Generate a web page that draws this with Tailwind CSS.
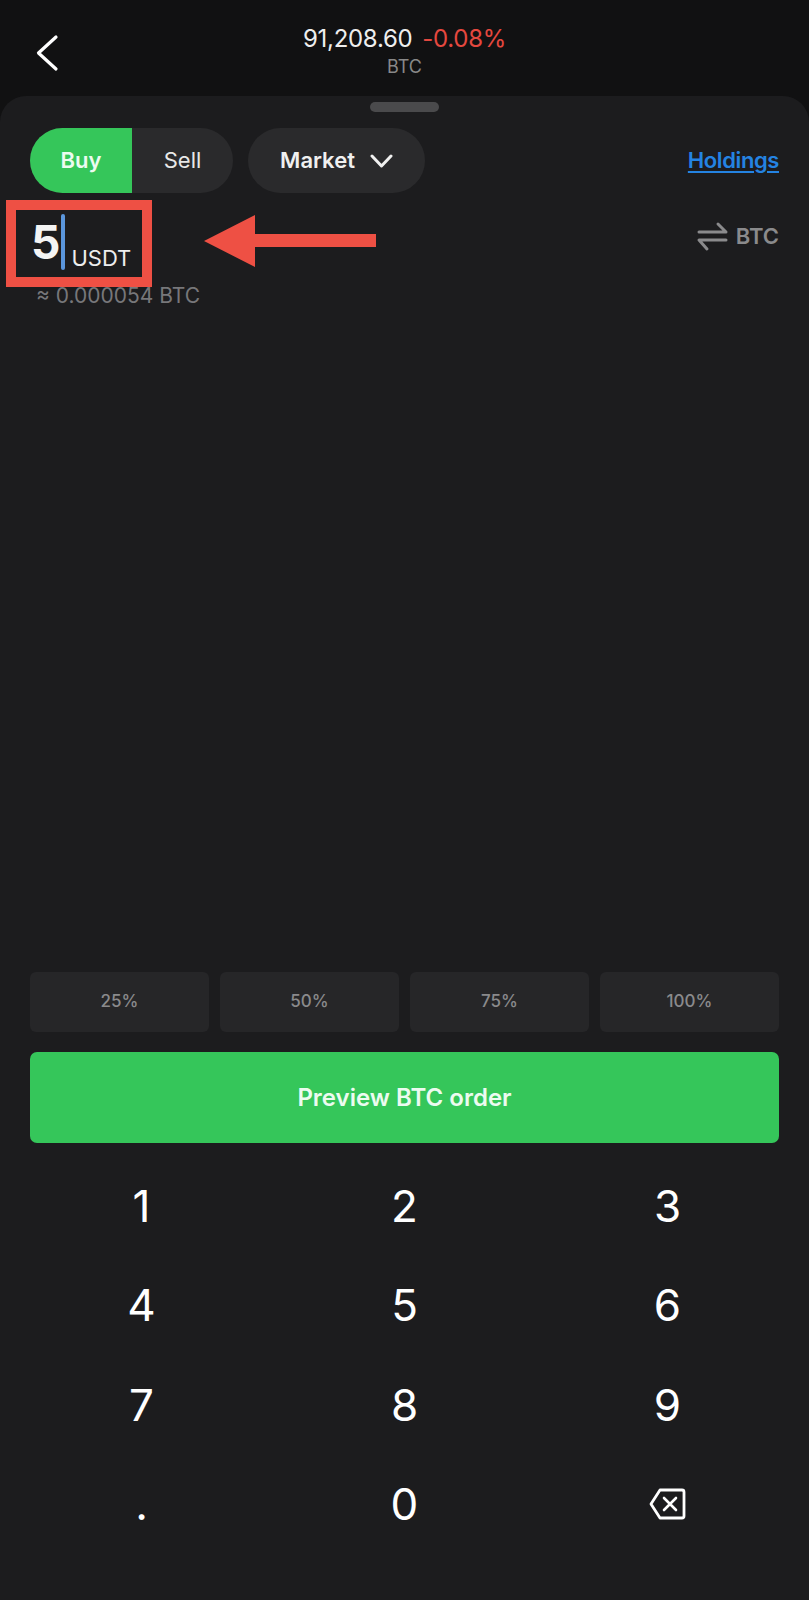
<!DOCTYPE html>
<html lang="en">
<head>
<meta charset="utf-8">
<script src="https://cdn.jsdelivr.net/npm/@tailwindcss/browser@4"></script>
<title>BTC order</title>
</head>
<body class="bg-[#111112] font-['Inter','Liberation_Sans',sans-serif]">
<div class="w-[809px] h-[1600px] flex flex-col overflow-hidden bg-[#111112]">
  <header class="relative h-[96px] shrink-0">
    <svg class="absolute left-[34px] top-[34px]" width="26" height="38" viewBox="0 0 26 38" fill="none"><path d="M22 4 L4.500 20 L22 36" stroke="#fff" stroke-width="3.200" stroke-linecap="round" stroke-linejoin="round" transform="translate(0 -1)"/></svg>
    <div class="flex flex-col items-center pt-[24px]">
      <div class="flex gap-[10px] text-[24px] leading-[30px] tracking-[-0.3px]">
        <span class="text-[#eeeeee]">91,208.60</span><span class="text-[#e5483f]">-0.08%</span>
      </div>
      <div class="text-[18px] leading-[24px] mt-[1px] text-[#888888]">BTC</div>
    </div>
  </header>
  <main class="relative flex-1 flex flex-col bg-[#1c1c1e] rounded-t-[26px] px-[30px]">
    <div class="absolute left-[370px] top-[6px] w-[69px] h-[10px] rounded-full bg-[#4a4a4c]"></div>
    <div class="flex items-center mt-[32px] h-[65px]">
      <div class="flex w-[203px] h-full rounded-full overflow-hidden bg-[#2a2a2c] text-[22px]">
        <div class="w-[102px] flex items-center justify-center bg-[#35c65a] text-[#ecfbf0] font-semibold">Buy</div>
        <div class="flex-1 flex items-center justify-center text-[#e8e8e8]">Sell</div>
      </div>
      <div class="ml-[15px] w-[177px] h-full rounded-full bg-[#2a2a2c] flex items-center justify-center gap-[15px] text-[22px] font-semibold text-[#f0f0f0]">
        <span>Market</span>
        <svg width="23" height="14" viewBox="0 0 23 14" fill="none"><path d="M2 2 L11.500 12 L21 2" stroke="#f0f0f0" stroke-width="3" stroke-linecap="round" stroke-linejoin="round"/></svg>
      </div>
      <a class="ml-auto text-[22px] font-semibold tracking-[-0.4px] text-[#2483e2] underline underline-offset-[3px] decoration-2">Holdings</a>
    </div>
    <div class="relative flex items-start mt-[21px] h-[70px]">
      <div class="flex items-end">
        <span class="ml-[1px] text-[46px] leading-[56px] font-bold text-[#f4f4f4]">5</span>
        <span class="ml-[1px] w-[4px] h-[56px] rounded-full bg-[#5b96dc]"></span>
        <span class="ml-[6px] text-[22px] leading-[30px] text-[#ededed] -mb-[3px]">USDT</span>
      </div>
      <div class="ml-auto mt-[6px] flex items-center gap-[8px] text-[22px] font-semibold text-[#8a8a8c]">
        <svg width="31" height="32" viewBox="0 0 31 32" fill="none"><path d="M2 11 H29 L21 3 M29 19 H2 L10 28" transform="translate(0 0)" stroke="#8a8a8c" stroke-width="3" stroke-linecap="round" stroke-linejoin="round"/></svg>
        <span>BTC</span>
      </div>
      <div class="absolute left-[-24px] top-[-14px] w-[146px] h-[87px] border-[10px] border-[#ee5044] pointer-events-none"></div>
      <svg class="absolute left-[174px] top-[1px]" width="174" height="52" viewBox="0 0 174 52"><path d="M0 26 L51 0 V19 H172 V32 H51 V52 Z" fill="#ee5044"/></svg>
    </div>
    <div class="-mt-[1px] ml-[6px] text-[21px] leading-[26px] text-[#77777a]">≈ 0.000054 BTC</div>
    <div class="mt-[663px] grid grid-cols-4 gap-[11px]">
      <div class="h-[60px] rounded-[6px] bg-[#262628] flex items-center justify-center text-[17px] font-medium text-[#8a8a8c]">25%</div>
      <div class="h-[60px] rounded-[6px] bg-[#262628] flex items-center justify-center text-[17px] font-medium text-[#8a8a8c]">50%</div>
      <div class="h-[60px] rounded-[6px] bg-[#262628] flex items-center justify-center text-[17px] font-medium text-[#8a8a8c]">75%</div>
      <div class="h-[60px] rounded-[6px] bg-[#262628] flex items-center justify-center text-[17px] font-medium text-[#8a8a8c]">100%</div>
    </div>
    <button class="mt-[20px] h-[91px] rounded-[7px] bg-[#35c65a] text-[24px] font-semibold text-[#ecfbf0]">Preview BTC order</button>
    <div class="-mx-[30px] mt-[13px] px-[10px] grid grid-cols-3 auto-rows-[99.500px] text-[44px] text-white text-center items-center">
      <div>1</div><div>2</div><div>3</div>
      <div>4</div><div>5</div><div>6</div>
      <div>7</div><div>8</div><div>9</div>
      <div>.</div><div>0</div>
      <div class="flex justify-center">
        <svg width="37" height="32" viewBox="0 0 37 32" fill="none"><path d="M11 2 H33 Q35 2 35 4 V28 Q35 30 33 30 H11 L2 16 Z" stroke="#fff" stroke-width="2.800" stroke-linejoin="round"/><path d="M15 10 L27 22 M27 10 L15 22" stroke="#fff" stroke-width="2.600" stroke-linecap="round"/></svg>
      </div>
    </div>
  </main>
</div>
</body>
</html>
